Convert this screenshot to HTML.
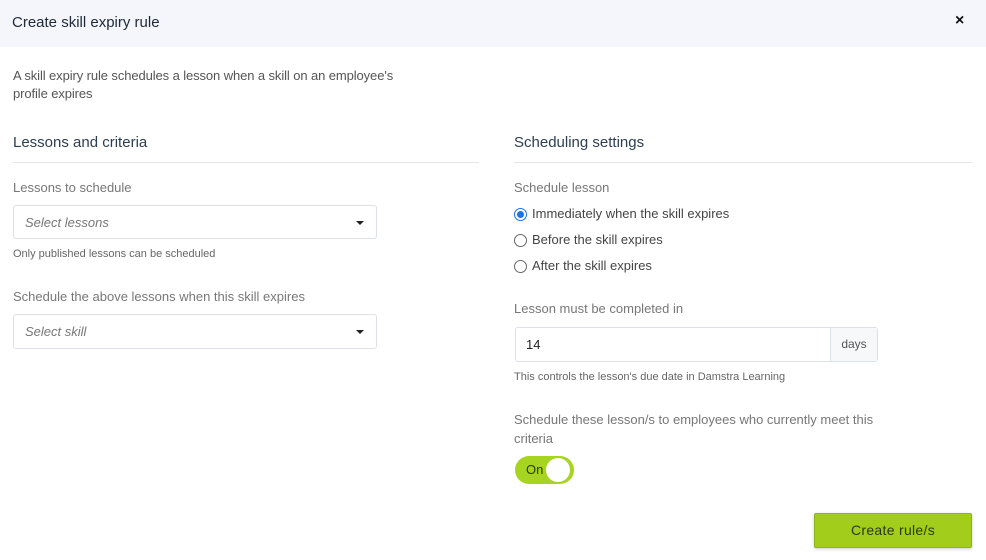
<!DOCTYPE html>
<html><head><style>
*{margin:0;padding:0;box-sizing:border-box}
body{width:986px;height:560px;background:#fff;font-family:"Liberation Sans",sans-serif;position:relative;overflow:hidden;color:#555}
.a{position:absolute;white-space:nowrap}
.hdr{position:absolute;left:0;top:0;width:986px;height:47px;background:#f4f6fb}
.h{font-size:15px;color:#2d3e50}
.lbl{font-size:13px;color:#777}
.sm{font-size:11px;color:#666}
.sel{position:absolute;border:1px solid #dde0e4;border-radius:3px;background:#fff}
.sel i{position:absolute;left:11px;top:9px;font-size:13px;color:#777}
.car{position:absolute;right:12px;top:15px;width:0;height:0;border-left:4px solid transparent;border-right:4px solid transparent;border-top:4px solid #222}
.line{position:absolute;height:1px;background:#e3e5e8}
.rad{position:absolute;width:13px;height:13px;border:1px solid #666;border-radius:50%;background:#fff}
.rt{font-size:13px;color:#444}
</style></head><body>
<div class="hdr"></div>
<div class="a" style="left:12px;top:14px;font-size:15px;color:#1f2a36">Create skill expiry rule</div>
<div class="a" style="left:955px;top:12px;font-size:16px;font-weight:bold;color:#111">×</div>
<div class="a" style="left:13px;top:67px;font-size:13px;line-height:18px;color:#555;letter-spacing:-0.1px">A skill expiry rule schedules a lesson when a skill on an employee's<br>profile expires</div>

<div class="a h" style="left:13px;top:134px">Lessons and criteria</div>
<div class="line" style="left:13px;top:162px;width:466px"></div>
<div class="a lbl" style="left:13px;top:180px">Lessons to schedule</div>
<div class="sel" style="left:13px;top:205px;width:364px;height:34px"><i>Select lessons</i><span class="car"></span></div>
<div class="a sm" style="left:13px;top:248px">Only published lessons can be scheduled</div>
<div class="a lbl" style="left:13px;top:289px">Schedule the above lessons when this skill expires</div>
<div class="sel" style="left:13px;top:314px;width:364px;height:35px"><i>Select skill</i><span class="car"></span></div>

<div class="a h" style="left:514px;top:134px">Scheduling settings</div>
<div class="line" style="left:514px;top:162px;width:458px"></div>
<div class="a lbl" style="left:514px;top:180px">Schedule lesson</div>
<div class="rad" style="left:514px;top:208px;border-color:#1a73e8"><div style="position:absolute;left:2px;top:2px;width:7px;height:7px;border-radius:50%;background:#1a73e8"></div></div>
<div class="a rt" style="left:532px;top:206px">Immediately when the skill expires</div>
<div class="rad" style="left:514px;top:234px"></div>
<div class="a rt" style="left:532px;top:232px">Before the skill expires</div>
<div class="rad" style="left:514px;top:260px"></div>
<div class="a rt" style="left:532px;top:258px">After the skill expires</div>
<div class="a lbl" style="left:514px;top:301px">Lesson must be completed in</div>
<div class="sel" style="left:515px;top:327px;width:363px;height:35px">
<span style="position:absolute;left:10px;top:9px;font-size:13px;color:#222">14</span>
<div style="position:absolute;left:314px;top:0;width:47px;height:33px;border-left:1px solid #dde0e4;background:#f7f8fa;font-size:12px;color:#555;text-align:center;line-height:33px">days</div></div>
<div class="a sm" style="left:514px;top:371px">This controls the lesson's due date in Damstra Learning</div>
<div class="a lbl" style="left:514px;top:410px;line-height:19px">Schedule these lesson/s to employees who currently meet this<br>criteria</div>
<div style="position:absolute;left:515px;top:456px;width:59px;height:28px;border-radius:14px;background:#a6d420">
<span style="position:absolute;left:11px;top:6px;font-size:13px;color:#2b3a12">On</span>
<div style="position:absolute;left:31px;top:2px;width:24px;height:24px;border-radius:50%;background:#fff"></div></div>
<div style="position:absolute;left:814px;top:513px;width:158px;height:35px;background:#a2cd1b;border:1px solid #8fb515;border-radius:2px;box-shadow:0 1px 3px rgba(0,0,0,.2);font-size:14px;color:#2a3a10;text-align:center;line-height:33px;letter-spacing:.3px">Create rule/s</div>
</body></html>
